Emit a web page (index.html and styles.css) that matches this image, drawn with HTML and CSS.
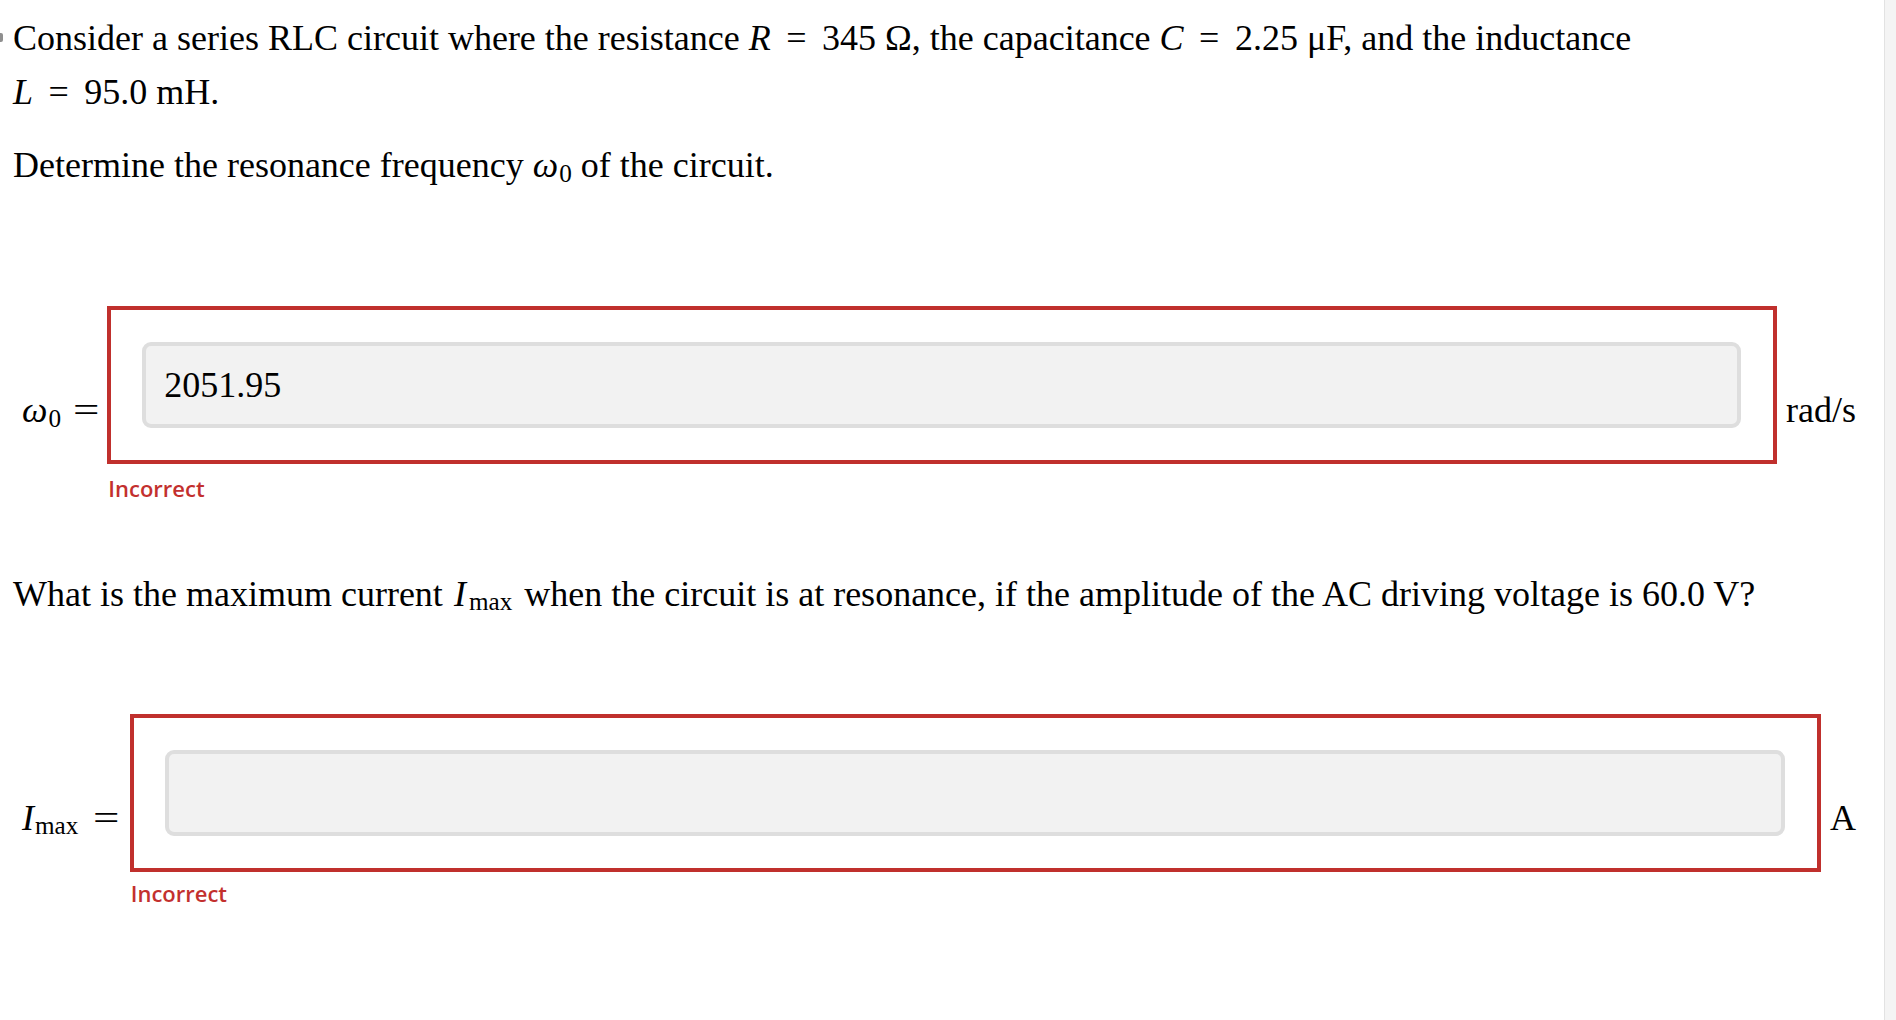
FILE: index.html
```html
<!DOCTYPE html>
<html lang="en">
<head>
<meta charset="utf-8">
<title>Series RLC circuit</title>
<link rel="stylesheet" href="styles.css">
</head>
<body>
<div class="frame">
  <main class="page">
    <span class="edge-mark"></span>
    <p class="text">Consider a series RLC circuit where the resistance <span class="m"><i>R</i><span class="eq">=</span>345<span class="sp"></span>Ω</span>, the capacitance <span class="m"><i>C</i><span class="eq">=</span>2.25<span class="sp"></span>μF</span>, and the inductance<br><span class="m"><i>L</i><span class="eq">=</span>95.0<span class="sp"></span>mH.</span></p>
    <p class="text text-gap">Determine the resonance frequency <span class="m"><i>ω</i><sub class="sub0">0</sub></span> of the circuit.</p>

    <div class="answer-row row-first">
      <div class="label"><i>ω</i><sub class="sub0">0</sub><span class="eq-big eq-omega">=</span></div>
      <div class="answer-col">
        <div class="answer-box"><input class="answer-input" type="text" value="2051.95"></div>
        <div class="feedback">Incorrect</div>
      </div>
      <div class="unit">rad/s</div>
    </div>

    <p class="text question-two">What is the maximum current <span class="m m-imax"><i>I</i><sub class="submax">max</sub></span> when the circuit is at resonance, if the amplitude of the AC driving voltage is 60.0 V?</p>

    <div class="answer-row row-second">
      <div class="label"><i>I</i><sub class="submax">max</sub><span class="eq-big">=</span></div>
      <div class="answer-col">
        <div class="answer-box"><input class="answer-input" type="text" value=""></div>
        <div class="feedback feedback-tight">Incorrect</div>
      </div>
      <div class="unit">A</div>
    </div>
  </main>
  <div class="scrollbar"></div>
</div>
</body>
</html>
```

FILE: styles.css
```css
html, body {
  margin: 0;
  padding: 0;
  background: #ffffff;
}

body {
  font-family: "Liberation Serif", "Times New Roman", serif;
  font-size: 36px;
  color: #000000;
}

.frame {
  display: flex;
  min-height: 1020px;
}

.page {
  position: relative;
  flex: 1;
  padding: 11px 28px 0 13px;
}

.scrollbar {
  width: 11px;
  background: #f4f4f4;
  border-left: 1px solid #e2e2e2;
}

.edge-mark {
  position: absolute;
  left: 0;
  top: 33px;
  width: 3px;
  height: 9px;
  background: #8f8f8f;
  border-radius: 0 2px 2px 0;
}

.text {
  margin: 0;
  line-height: 54px;
}

.text-gap {
  margin-top: 19px;
}

.m {
  white-space: nowrap;
}

.m i,
.label i {
  font-style: italic;
}

.eq {
  margin: 0 0.43em;
}

.sp {
  display: inline-block;
  width: 0.25em;
}

.sub0 {
  font-size: 0.7em;
  vertical-align: -0.2em;
  line-height: 0;
  margin-left: 1px;
}

.submax {
  font-size: 0.7em;
  vertical-align: -0.17em;
  line-height: 0;
  margin-left: 1px;
}

.m-imax {
  padding-left: 2px;
  padding-right: 3px;
}

.m-imax .submax {
  margin-left: 3px;
}

.answer-row {
  display: flex;
  align-items: flex-start;
}

.row-first {
  margin-top: 114px;
}

.row-second {
  margin-top: 93px;
}

.label {
  padding-top: 77px;
  padding-left: 9px;
  margin-right: 10px;
  line-height: 54px;
  white-space: nowrap;
}

.eq-big {
  display: inline-block;
  margin-left: 15px;
  margin-right: 6px;
  transform: scaleX(1.3);
  transform-origin: left center;
}

.eq-omega {
  margin-left: 12px;
  margin-right: 4px;
}

.answer-col {
  flex: 1;
  min-width: 0;
}

.answer-box {
  border: 4px solid #c0302d;
  padding: 32px 32px 32px 31px;
}

.answer-input {
  display: block;
  box-sizing: border-box;
  width: 100%;
  height: 86px;
  margin: 0;
  padding: 0 18px;
  border: 4px solid #dedede;
  border-radius: 9px;
  background: #f2f2f2;
  font-family: "Liberation Serif", "Times New Roman", serif;
  font-size: 36px;
  color: #000000;
  outline: none;
}

.feedback {
  margin-top: 9px;
  padding-left: 1px;
  font-family: "Open Sans", "Liberation Sans", sans-serif;
  font-weight: 600;
  font-size: 22px;
  line-height: 30px;
  color: #c3302e;
}

.feedback-tight {
  margin-top: 6px;
}

.unit {
  padding-top: 77px;
  margin-left: 9px;
  line-height: 54px;
  white-space: nowrap;
}

.question-two {
  margin-top: 64px;
}
```
